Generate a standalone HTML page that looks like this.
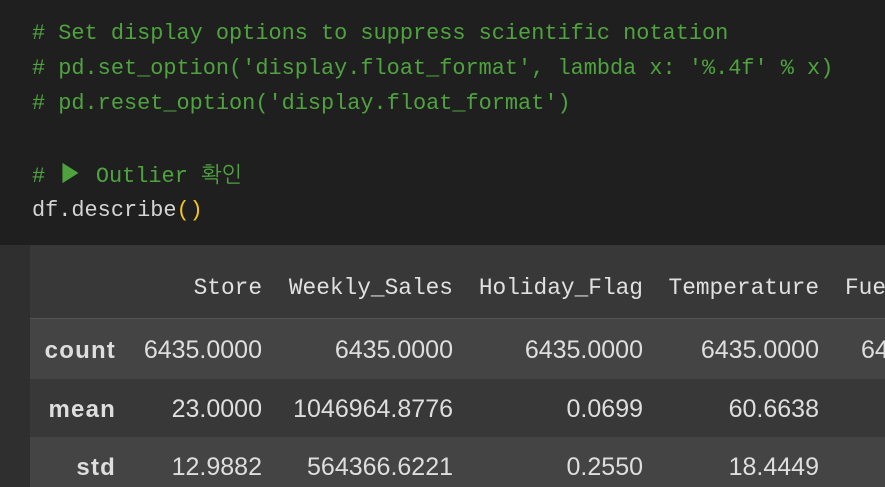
<!DOCTYPE html>
<html><head><meta charset="utf-8"><style>
html,body{margin:0;width:885px;height:487px;overflow:hidden}
body{background:#1f1f1f;font-family:"Liberation Mono","NanumGothic",monospace}
#w{position:relative;width:885px;height:487px;overflow:hidden}
.c{position:absolute;left:32px;font-size:21.9px;color:#4fa33f;white-space:pre;line-height:35px}
.out{position:absolute;left:0;top:245px;width:885px;height:242px;background:#383838}
.strip{position:absolute;left:0;top:245px;width:30px;height:242px;background:#2f2f2f}
.row{position:absolute;left:30px;width:855px}
.h{position:absolute;font-size:22.8px;color:#e0e0e0;white-space:pre;top:275px;text-align:right}
.n{position:absolute;font-family:"Liberation Sans",sans-serif;font-size:25px;color:#dedede;text-align:right;white-space:pre}
.l{position:absolute;font-family:"Liberation Sans",sans-serif;font-weight:bold;font-size:24px;letter-spacing:1.2px;color:#dedede;text-align:right;width:86px;left:30px}
</style></head><body><div id="w">
<div class="c" style="top:16px"># Set display options to suppress scientific notation</div>
<div class="c" style="top:51px"># pd.set_option('display.float_format', lambda x: '%.4f' % x)</div>
<div class="c" style="top:86px"># pd.reset_option('display.float_format')</div>
<div class="c" style="top:158px"># <span style="font-size:26px">▶</span> Outlier 확인</div>
<div class="c" style="top:193px;color:#d4d4d4">df.describe<span style="color:#f5c518">()</span></div>
<div class="out"></div>
<div class="strip"></div>
<div class="row" style="top:318px;height:60px;background:#444444;border-top:1px solid #555"></div>
<div class="row" style="top:437px;height:50px;background:#444444"></div>
<div class="h" style="right:623px">Store</div>
<div class="h" style="right:432px">Weekly_Sales</div>
<div class="h" style="right:242px">Holiday_Flag</div>
<div class="h" style="right:66px">Temperature</div>
<div class="h" style="left:845px">Fuel</div>
<div class="l" style="top:337px">count</div>
<div class="l" style="top:396px">mean</div>
<div class="l" style="top:454px">std</div>
<div class="n" style="top:336px;right:623px">6435.0000</div>
<div class="n" style="top:336px;right:432px">6435.0000</div>
<div class="n" style="top:336px;right:242px">6435.0000</div>
<div class="n" style="top:336px;right:66px">6435.0000</div>
<div class="n" style="top:336px;left:861px">6435.0000</div>
<div class="n" style="top:395px;right:623px">23.0000</div>
<div class="n" style="top:395px;right:432px">1046964.8776</div>
<div class="n" style="top:395px;right:242px">0.0699</div>
<div class="n" style="top:395px;right:66px">60.6638</div>
<div class="n" style="top:453px;right:623px">12.9882</div>
<div class="n" style="top:453px;right:432px">564366.6221</div>
<div class="n" style="top:453px;right:242px">0.2550</div>
<div class="n" style="top:453px;right:66px">18.4449</div>
</div></body></html>
